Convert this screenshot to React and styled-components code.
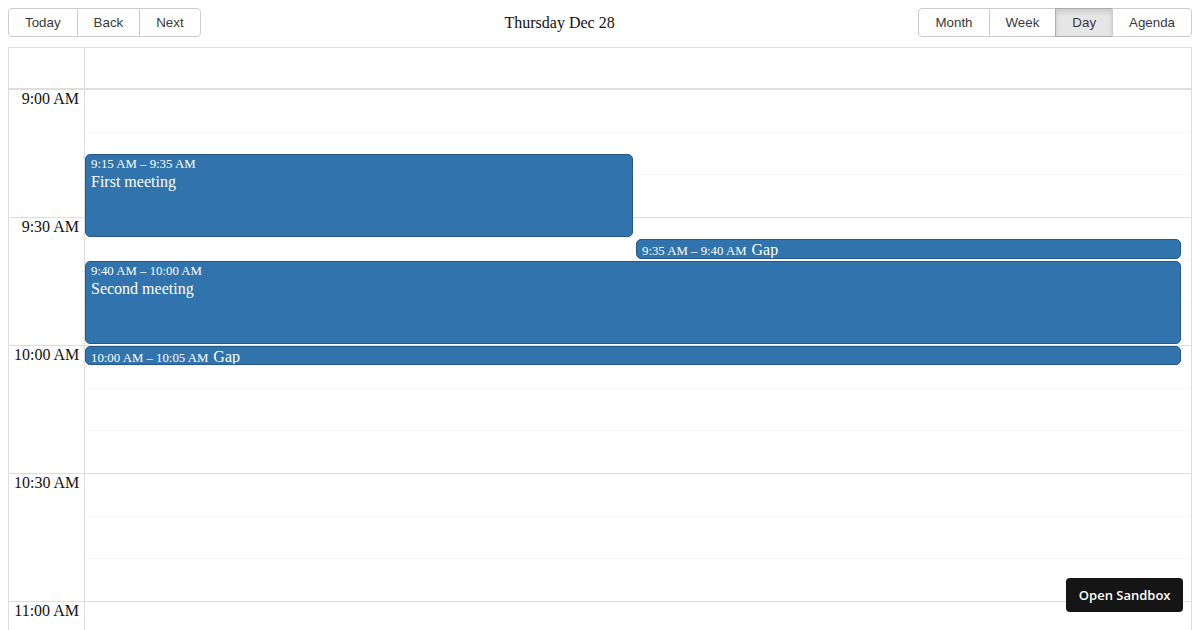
import React from "react";
import styled, { createGlobalStyle } from "styled-components";

const GlobalStyle = createGlobalStyle`
  html, body {
    overflow: hidden;
  }
  body {
    margin: 8px;
    font-family: "Liberation Serif", "Times New Roman", serif;
    font-size: 16px;
    color: #111;
    background: #fff;
  }
  * {
    box-sizing: border-box;
  }
`;

const SLOT_GROUP = 128;

const Toolbar = styled.div`
  display: flex;
  align-items: center;
  margin-bottom: 10px;
`;

const ButtonGroup = styled.span`
  display: inline-flex;
`;

const ToolButton = styled.button`
  font-family: "Liberation Sans", Arial, sans-serif;
  font-size: 13.33px;
  color: #373a3c;
  background: ${(p) => (p.$active ? "#e6e6e6" : "#fff")};
  border: 1px solid ${(p) => (p.$active ? "#adadad" : "#ccc")};
  box-shadow: ${(p) => (p.$active ? "inset 0 3px 5px rgba(0, 0, 0, 0.125)" : "none")};
  padding: 6px 16px;
  line-height: 15px;
  margin: 0;
  border-radius: 0;

  & + & {
    margin-left: -1px;
  }
  &:first-child {
    border-radius: 4px 0 0 4px;
  }
  &:last-child {
    border-radius: 0 4px 4px 0;
  }
`;

const Label = styled.span`
  flex-grow: 1;
  padding: 0 10px;
  text-align: center;
`;

const TimeView = styled.div`
  border: 1px solid #ddd;
  display: flex;
  flex-direction: column;
`;

const Header = styled.div`
  display: flex;
  height: 40px;
`;

const Gutter = styled.div`
  width: 75px;
  flex-shrink: 0;
`;

const HeaderCell = styled.div`
  flex: 1;
  border-left: 1px solid #ddd;
`;

const Content = styled.div`
  display: flex;
  border-top: 2px solid #ddd;
`;

const SlotGroup = styled.div`
  height: ${SLOT_GROUP}px;
  border-bottom: 1px solid #ddd;
  display: flex;
  flex-direction: column;
`;

const GutterLabel = styled.div`
  padding: 0 5px;
  text-align: right;
  white-space: nowrap;
`;

const Slot = styled.div`
  flex: 1;
  & + & {
    border-top: 1px solid #f7f7f7;
  }
`;

const DayColumn = styled.div`
  flex: 1;
  border-left: 1px solid #ddd;
  position: relative;
`;

const EventLayer = styled.div`
  position: absolute;
  top: 0;
  bottom: 0;
  left: 0;
  right: 10px;
`;

const Event = styled.div`
  position: absolute;
  background: #3174ad;
  border: 1px solid #265985;
  border-radius: 5px;
  color: #fff;
  padding: ${(p) => (p.$short ? "0 5px" : "2px 5px")};
  overflow: hidden;
  display: flex;
  flex-direction: ${(p) => (p.$short ? "row" : "column")};
  align-items: ${(p) => (p.$short ? "baseline" : "flex-start")};
  gap: ${(p) => (p.$short ? "5px" : "0")};
  white-space: nowrap;
`;

const EventTime = styled.div`
  font-size: 12.8px;
  line-height: 15px;
`;

const EventTitle = styled.div`
  font-size: 16px;
  line-height: 19px;
`;

const SandboxButton = styled.button`
  position: fixed;
  right: 17px;
  bottom: 18px;
  height: 34px;
  padding: 0 12.5px;
  background: #151515;
  color: #fff;
  border: none;
  border-radius: 4px;
  font-family: "Open Sans", "Noto Sans", sans-serif;
  font-size: 13px;
  font-weight: 600;
`;

const hours = ["9:00 AM", "9:30 AM", "10:00 AM", "10:30 AM", "11:00 AM"];

// minutes from 9:00, geometry inside the events layer (width 1096)
const events = [
  { start: 15, end: 35, time: "9:15 AM – 9:35 AM", title: "First meeting", left: 0, width: 548 },
  { start: 35, end: 40, time: "9:35 AM – 9:40 AM", title: "Gap", left: 551, width: 545 },
  { start: 40, end: 60, time: "9:40 AM – 10:00 AM", title: "Second meeting", left: 0, width: 1096 },
  { start: 60, end: 65, time: "10:00 AM – 10:05 AM", title: "Gap", left: 0, width: 1096 },
];

const pxPerMin = SLOT_GROUP / 30;

function App() {
  return (
    <>
      <GlobalStyle />
      <Toolbar>
        <ButtonGroup>
          <ToolButton>Today</ToolButton>
          <ToolButton>Back</ToolButton>
          <ToolButton>Next</ToolButton>
        </ButtonGroup>
        <Label>Thursday Dec 28</Label>
        <ButtonGroup>
          <ToolButton>Month</ToolButton>
          <ToolButton>Week</ToolButton>
          <ToolButton $active>Day</ToolButton>
          <ToolButton>Agenda</ToolButton>
        </ButtonGroup>
      </Toolbar>

      <TimeView>
        <Header>
          <Gutter />
          <HeaderCell />
        </Header>
        <Content>
          <Gutter>
            {hours.map((h) => (
              <SlotGroup key={h}>
                <GutterLabel>{h}</GutterLabel>
              </SlotGroup>
            ))}
          </Gutter>
          <DayColumn>
            {hours.map((h) => (
              <SlotGroup key={h}>
                <Slot />
                <Slot />
                <Slot />
              </SlotGroup>
            ))}
            <EventLayer>
              {events.map((ev) => {
                const short = ev.end - ev.start < 10;
                return (
                  <Event
                    key={ev.time}
                    $short={short}
                    style={{
                      top: ev.start * pxPerMin,
                      height: (ev.end - ev.start) * pxPerMin - 2,
                      left: `${(ev.left / 1096) * 100}%`,
                      width: `${(ev.width / 1096) * 100}%`,
                    }}
                  >
                    <EventTime>{ev.time}</EventTime>
                    <EventTitle>{ev.title}</EventTitle>
                  </Event>
                );
              })}
            </EventLayer>
          </DayColumn>
        </Content>
      </TimeView>

      <SandboxButton>Open Sandbox</SandboxButton>
    </>
  );
}

export default App;
